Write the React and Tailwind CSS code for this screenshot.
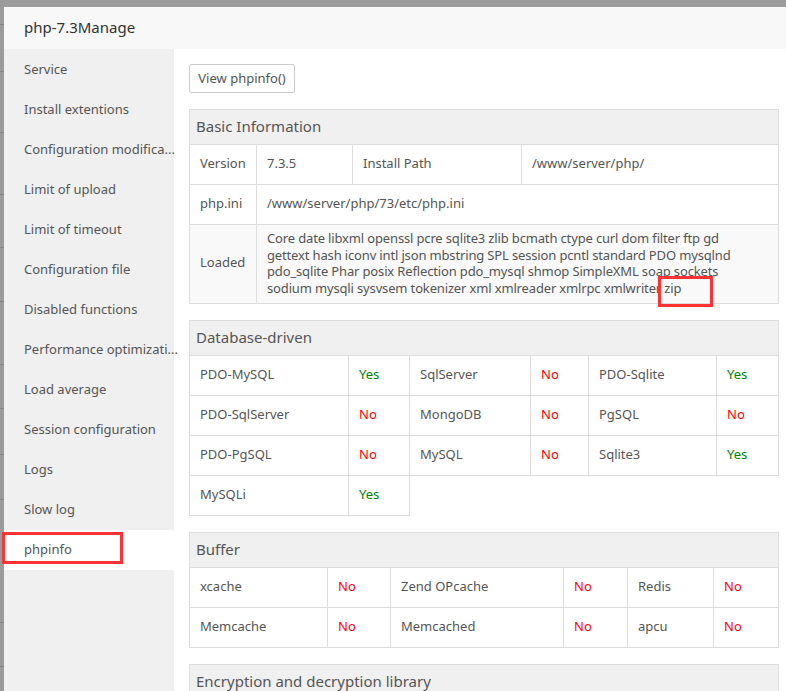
import React from 'react';

const menu = [
  'Service',
  'Install extentions',
  'Configuration modifica...',
  'Limit of upload',
  'Limit of timeout',
  'Configuration file',
  'Disabled functions',
  'Performance optimizati...',
  'Load average',
  'Session configuration',
  'Logs',
  'Slow log',
  'phpinfo',
];

const dbRows = [
  [['PDO-MySQL', true], ['SqlServer', false], ['PDO-Sqlite', true]],
  [['PDO-SqlServer', false], ['MongoDB', false], ['PgSQL', false]],
  [['PDO-PgSQL', false], ['MySQL', false], ['Sqlite3', true]],
  [['MySQLi', true]],
];

const bufRows = [
  [['xcache', false], ['Zend OPcache', false], ['Redis', false]],
  [['Memcache', false], ['Memcached', false], ['apcu', false]],
];

// faint rows of the page behind the dialog, seen on the left edge
const backdropRows = [18, 47, 61, 62, 53, 54, 63, 44, 46, 45, 123, 44];

function SectionHead({ children }) {
  return (
    <div className="h-[35px] flex items-center pl-[6px] pb-px border-x border-t border-[#ddd] bg-[#f0f0f0] text-[15px] text-[#555]">
      {children}
    </div>
  );
}

function Status({ ok }) {
  return ok
    ? <span className="text-[#008000]">Yes</span>
    : <span className="text-[#ff0000]">No</span>;
}

function FlagTable({ rows, widths }) {
  return (
    <table className="w-full table-fixed border-collapse text-[13px] text-[#555]">
      <colgroup>
        {widths.map((w, i) => (
          <col key={i} style={{ width: w }} />
        ))}
      </colgroup>
      <tbody>
        {rows.map((row, r) => (
          <tr key={r} className="h-10">
            {row.map(([name, ok]) => (
              <React.Fragment key={name}>
                <td className="border border-[#ddd] pl-[10px] pb-[2px]">{name}</td>
                <td className="border border-[#ddd] pl-[10px] pb-[2px]"><Status ok={ok} /></td>
              </React.Fragment>
            ))}
          </tr>
        ))}
      </tbody>
    </table>
  );
}

export default function App() {
  return (
    <div
      className="w-[786px] h-[691px] overflow-hidden bg-[#9b9b9b] flex flex-col"
      style={{ fontFamily: '"Noto Sans", "Open Sans", Arial, sans-serif' }}
    >
      <div className="h-[7px] shrink-0" />
      <div className="flex flex-1 min-h-0">
        {/* backdrop edge */}
        <div className="w-[4px] shrink-0 flex flex-col">
          {backdropRows.map((h, i) => (
            <div key={i} className="shrink-0 border-b border-[#858585]" style={{ height: h }} />
          ))}
        </div>

        <div className="w-[789px] shrink-0 bg-white flex flex-col">
          {/* Title bar */}
          <div className="h-[42px] shrink-0 flex items-center pl-5 pb-px bg-[#f8f8f8] text-[15px] text-[#333]">
            php-7.3Manage
          </div>

          <div className="flex flex-1 min-h-0">
            {/* Sidebar */}
            <div className="w-[170px] shrink-0 bg-[#f0f0f0] text-[13px] text-[#555] pt-px">
              {menu.map((item) => {
                const active = item === 'phpinfo';
                return (
                  <div
                    key={item}
                    className={`relative h-10 flex items-center pl-5 whitespace-nowrap ${active ? 'bg-white' : ''}`}
                  >
                    {item}
                    {active && (
                      <div className="absolute left-[-2px] top-[2px] w-[121px] h-[32px] border-[3px] border-[#f33]" />
                    )}
                  </div>
                );
              })}
            </div>

            {/* Content */}
            <div className="flex-1 px-[15px] pt-[15px] flex flex-col gap-4">
              <div>
                <button
                  type="button"
                  className="h-[29px] w-[106px] border border-[#ccc] rounded-[2px] bg-white text-[13px] text-[#555]"
                >
                  View phpinfo()
                </button>
              </div>

              <div>
                <SectionHead>Basic Information</SectionHead>
                <table className="w-full table-fixed border-collapse text-[13px] text-[#555]">
                  <colgroup>
                    <col className="w-[67px]" />
                    <col className="w-[96px]" />
                    <col className="w-[169px]" />
                    <col />
                  </colgroup>
                  <tbody>
                    <tr className="h-10">
                      <td className="border border-[#ddd] pl-[10px] pb-[2px]">Version</td>
                      <td className="border border-[#ddd] pl-[10px] pb-[2px]">7.3.5</td>
                      <td className="border border-[#ddd] pl-[10px] pb-[2px]">Install Path</td>
                      <td className="border border-[#ddd] pl-[10px] pb-[2px]">/www/server/php/</td>
                    </tr>
                    <tr className="h-10">
                      <td className="border border-[#ddd] pl-[10px] pb-[2px]">php.ini</td>
                      <td colSpan={3} className="border border-[#ddd] pl-[10px] pb-[2px]">/www/server/php/73/etc/php.ini</td>
                    </tr>
                    <tr className="h-[79px] bg-[#f9f9f9]">
                      <td className="border border-[#ddd] pl-[10px] pb-[2px]">Loaded</td>
                      <td colSpan={3} className="border border-[#ddd] pl-[10px] pb-[2px] leading-[16.5px] tracking-[-0.15px]">
                        <div className="whitespace-nowrap">Core date libxml openssl pcre sqlite3 zlib bcmath ctype curl dom filter ftp gd</div>
                        <div className="whitespace-nowrap">gettext hash iconv intl json mbstring SPL session pcntl standard PDO mysqlnd</div>
                        <div className="whitespace-nowrap">pdo_sqlite Phar posix Reflection pdo_mysql shmop SimpleXML soap sockets</div>
                        <div className="whitespace-nowrap">
                          sodium mysqli sysvsem tokenizer xml xmlreader xmlrpc xmlwriter{' '}
                          <span className="relative">
                            zip
                            <span className="absolute left-[-6px] top-[-3px] w-[55px] h-[31px] border-[3px] border-[#f33]" />
                          </span>
                        </div>
                      </td>
                    </tr>
                  </tbody>
                </table>
              </div>

              <div>
                <SectionHead>Database-driven</SectionHead>
                <FlagTable rows={dbRows} widths={['159px', '61px', '121px', '58px', '128px', '62px']} />
              </div>

              <div>
                <SectionHead>Buffer</SectionHead>
                <FlagTable rows={bufRows} widths={['138px', '63px', '173px', '64px', '86px', '65px']} />
              </div>

              <div>
                <SectionHead>Encryption and decryption library</SectionHead>
              </div>
            </div>
          </div>
        </div>
      </div>
    </div>
  );
}
